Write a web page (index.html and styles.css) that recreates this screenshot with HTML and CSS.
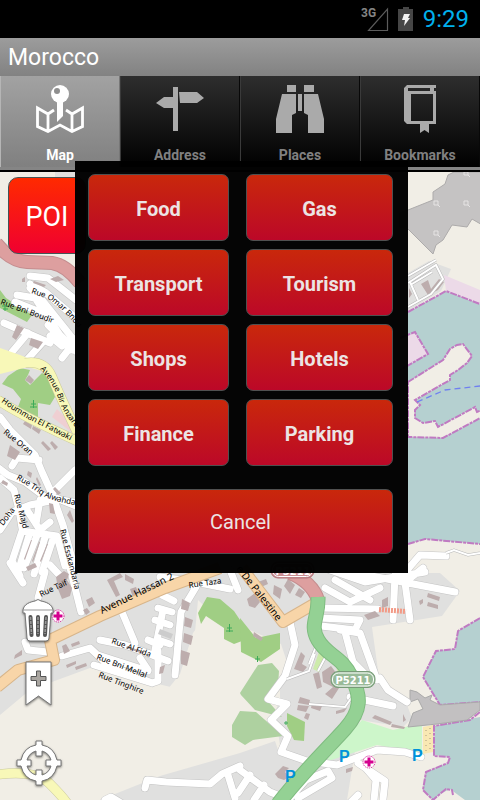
FILE: index.html
```
<!DOCTYPE html>
<html lang="en">
<head>
    <meta charset="UTF-8">
    <meta name="viewport" content="width=device-width, initial-scale=1.0">
    <title>Morocco</title>
    <link rel="stylesheet" href="styles.css">
</head>
<body>
    <div class="status-bar">
        <svg class="signal" width="28" height="24" viewBox="0 0 28 24">
            <text x="0" y="10" class="signal-text">3G</text>
            <path d="M26.500 2V23.500H7.500Z" fill="none" stroke="#5c5c5c" stroke-width="1.200"/>
        </svg>
        <svg class="battery" width="16" height="24" viewBox="0 0 16 24">
            <path d="M5 0h6v2h4v22H0V2h5z" fill="#464646"/>
            <path d="M6 7h6l-2 4h2L6 19l1-6H4z" fill="#f2f2f2"/>
        </svg>
        <span class="clock">9:29</span>
    </div>
    <header class="title-bar"><h1>Morocco</h1></header>
    <nav class="tabs">
        <a href="#map" class="tab active">
            <svg width="48" height="48" viewBox="0 0 48 48">
                <circle cx="24" cy="9" r="9" fill="currentColor"/>
                <circle cx="21" cy="6" r="3" fill="#8f8f8f"/>
                <path d="M21 17h6v14l-6 6z" fill="currentColor"/>
                <path d="M18 25l-6 4-10.500-6v18.500l10.500 5 12-6.500 12 6.500 10.500-5V23L36 29l-6-4M12 29v17M36 29v17" fill="none" stroke="currentColor" stroke-width="2.800"/>
            </svg>
            <span>Map</span>
        </a>
        <a href="#address" class="tab">
            <svg width="48" height="48" viewBox="0 0 48 48">
                <path d="M17 2h5v44h-5zM17 12H8l-8 6 8 5h9zM23 7h18l7 6-7 5H24z" fill="currentColor"/>
            </svg>
            <span>Address</span>
        </a>
        <a href="#places" class="tab">
            <svg width="48" height="48" viewBox="0 0 48 48">
                <path d="M11 0h9v7h-9zM28 0h10v7H28zM6 9h14v19l-4 2v18H0V34zM28 9h14l6 25v14H32V30l-4-2zM22 9h4v17h-4z" fill="currentColor"/>
            </svg>
            <span>Places</span>
        </a>
        <a href="#bookmarks" class="tab">
            <svg width="48" height="48" viewBox="0 0 48 48">
                <path fill-rule="evenodd" d="M11 0h29v3h-2v3h2v33h-7v9l-4.500-3-4.500 3v-9H11l-3-3V3zM12 3v3h22V3zM15 9v27h22V9z" fill="currentColor"/>
            </svg>
            <span>Bookmarks</span>
        </a>
    </nav>

    <main class="map-view">
        <svg class="map" viewBox="0 172 480 628" preserveAspectRatio="xMidYMid slice">
            <defs>
                <path id="omar" d="M31 293L48 299Q63 309 76 325L110 360"/>
                <path id="anza" d="M40 369Q53 383 58 398T76 428L110 474"/>
                <path id="houm" d="M1 402Q20 415 36 423T73 442L110 460"/>
                <path id="triq" d="M16 479Q30 487 40 494T75 505L110 515"/>
                <g id="streets">
                    <path d="M30 276L48 278 76 300M30 284L45 292 78 320M30 288L42 300 78 345M17 295L35 298 70 350M15 302l25 10M48 325l25 25M55 330l25 25M50 336l12 10M4 323L50 343M28 333L12 352M43 342L25 362M62 358L80 335"/>
                    <path d="M0 417L10 430 35 455 42 472 52 494 63 525 75 570M-3 467L8 475 25 482 45 497 78 503M12 466l5-8 22 2M0 478L14 490 19 510 22 528M0 530L12 512 30 505 55 500M25 507L40 530 50 522M40 500l-4 24M75 470l-25 25M56 498l20 8"/>
                    <path d="M22 531l-10 30 8 15M30 532l-12 40M38 533l-14 35M46 534l-12 40M54 536l-12 36M22 531l35 5 8 30M10 563l13 20M45 572L38 598M50 565l14 15M70 568l11 44"/>
                    <path d="M25 642l3 8 20 2M122 612l13 31M100 640l25 5 28 10M62 656L90 648 108 665 152 683M98 655l50 16M94 665l58 18 6-2v-30M140 658l8 12M155 650l8-40M158 640l12 4M148 640l12 5M155 620l15 5M158 608l14 4M162 595l12 6M152 655l16 6M196 587l-15 25-6 63M160 577l30 4 40 8M197 571l-3 18M230 570l8 20"/>
                    <path d="M145 788L147 780 166 782 210 784 222 774 240 766M228 775L235 798M105 800l6-3 10 6M240 770L270 792 290 800M250 775l-12 18M264 785l-10 15"/>
                    <path d="M290 622L295 645 285 676 268 699 287 704 271 720 288 736 281 752 307 761 337 765 377 750 405 752 421 757"/>
                    <path d="M325 588L350 602 380 588M335 580L370 600M330 570L365 582 425 572M340 570L455 592M395 575l-2 45M404 575l6 45M320 608l58 1M320 618l40 2-5 10-34-4M340 630l20 3 17 47M345 632l8 30 18 18M380 678l8 12 19 12M350 697l43 9M408 580l15-12"/>
                    <path d="M298 798l34-20-4-7-22 9-14 16M358 763l27 18-2 18M363 765l13 15-2 20M350 803l8-8"/>
                    <path d="M408 569L420 555 446 556"/>
                </g>
            </defs>
            <rect y="172" width="480" height="628" fill="#f1eee6"/>

            <!-- built up areas -->
            <g fill="#e0e0df">
                <path d="M0 238L27 260 80 275V573H440L460 591 442 616 372 627 380 685 407 705 412 718 403 727 360 720 347 800H100L160 780 240 752V640L198 600 192 665 175 688 90 668 30 690 0 715z"/>
                <path d="M55 178l20 8v-14H55z"/>
                <path d="M408 273l21-12 22 8-10 22-33 20z"/>
            </g>
            <path d="M193 633l20-27 28 20 40 18 10 30-16 38 6 40-40 4-42 28H150l-10-60 40-50z" fill="#f1eee6"/>
            <path d="M100 800l60-24 80-23 35-12 20 59z" fill="#e0e0df"/>
            <path d="M280 690l15-48 30-16 22 36 11 37-32 40-46 12z" fill="#e0e0df"/>
            <path d="M388 760l4 0-14 40h80V760z" fill="#f1eee6"/>

            <!-- parks and woods -->
            <g fill="#a0ce84">
                <path d="M0 290L6 298 32 315 27 322 0 308z"/>
                <path d="M20 368l10 2-2 5-3 5 5 5 12-12 8 4 5 20-5 8-12-2v14l-6 2-14-12 3-8-8-10-11-5 6-8z"/>
                <path d="M198 613l9-16 13 2 14 12 8 12v18l-8 3-10-5v-11l-18-12-5 8z"/>
                <path d="M240 618l16 20 24-5v16l-19 13-20-10z"/>
                <path d="M287 713l18 9-1 19-10-1-7-14z"/>
            </g>
            <g fill="#aed1a0">
                <path d="M240 693l18-28 14-2 7 8-1 15-11 14 15 17-27-7-14-15z"/>
                <path d="M232 725l8-14 16 1 17 15 10 9-30 4-8 5-13-8z"/>
            </g>
            <path d="M362 720l31 10 29-7v30l-45-8-52 17z" fill="#cdf6ca"/>
            <path d="M319 652l7 5-7 15-6-3zM336 665l10 12-8-1z" fill="#cdebab"/>
            <path d="M57 409l18 18v8l-23-18z" fill="#efcfd2"/>
            <path d="M423 727l10-2v27l-10 2z" fill="#f9e8b3"/>
            <path d="M426 730v21M430 728v22" stroke="#a99b7c" stroke-width="1" stroke-dasharray="1 4"/>

            <!-- sea -->
            <g fill="#b5d0d0">
                <path d="M408 312L446 291 480 304V544L425 539 408 544z"/>
                <path d="M480 618l-22 13-3 18-19 2-13 26 17 28 40-3z"/>
                <path d="M480 717l-45 9-1 29 16 2-2 6-22 9-3 18 10 10 7-6 10-5 34 25z"/>
            </g>
            <path d="M444 275l36 15v14l-34-13z" fill="#ecdae8"/>
            <path class="coast-land" d="M408 382L443 360 450 349 457 345 463 344 472 356 467 363 458 370 450 375 450 380 415 400 420 405 415 410 415 418 423 423 435 421 438 427 475 407 477 412 484 409V416L443 438 408 437z"/>
            <path d="M400 338l15-6 13 22-28 16z" fill="#ecdae8"/>
            <g class="coast">
                <path d="M408 312L446 291 480 304"/>
                <path d="M400 338l15-6 13 22-28 16"/>
                <path d="M408 544L425 539 480 544"/>
                <path d="M480 618l-22 13-3 18-19 2-13 26 17 28 40-3"/>
                <path d="M480 712l-10 8-36 6v30l16 1-2 6-22 9-3 18 10 10 8-7 5-4 6 1 1 5"/>
            </g>
            <path d="M417 402L445 390 480 386" fill="none" stroke="#7080f0" stroke-width="1.300" stroke-dasharray="6 4"/>
            <path d="M400 213l8-3 25-10v-8l12-8 3-9 6-3h30v54l-12-7-5 8-15-2-9 15-7 5-3 9-25-25-8-2z" fill="#c5c3c3" stroke="#adabab"/>
            <path d="M410 690l7 2 8 6 7-3-2 5 10 5 40-3v8l-13 10-30 4-29 3 5-14 10-4-5-10-8 3z" fill="#c2c0c1" stroke="#aaa"/>
            <g fill="none" stroke="#e6e4e4">
                <path d="M464 172h4v3h-4zM468 175l2 2M434 201h4v4h-4zM438 205l2 2M464 201h4v4h-4zM468 205l2 2M434 231h4v4h-4zM438 235l2 2"/>
            </g>

            <!-- streets, outline first and then the fill -->
            <use href="#streets" class="case"/>
            <use href="#streets" class="fill"/>

            <!-- buildings -->
            <g fill="#bdadad">
                <path d="M22 279l3-2v5h-3zM34 281l12 4-2 2-11-4zM50 279l8-3 6 4-8 2z"/>
                <path d="M31 338l12 4-5 7-9-4zM17 325l7 3-8 12-4-3z"/>
                <path d="M29 375l5 5-3 4-6-4z"/>
                <path d="M25 421l7 4-1 4-8-5zM33 426l8 4-2 4-7-5zM43 441l8 8-3 2-7-8zM52 441l6 6-3 3-5-7z"/>
                <path d="M10 445l10 7-5 8-8-4zM28 471l4 2-1 5-4-3zM37 477l4 8-2 1-3-7zM55 487l6 6-3 2-5-6zM49 503l4 1 2 10-5-1zM67 515l3-5 4 11-2 2z"/>
                <path d="M3 480l5 3-1 3-6-3zM26 567l9-4 2 4-9 4zM31 540l1 0-7 20-1-1zM39 542l1 0-7 20-1-1zM47 544l1 0-7 18-1-1z"/>
                <path d="M56 577l8-6 5 3-2 6 5 8-2 8-8 3-4-10z"/>
                <path d="M107 580l13-7 3 4-9 4 6 14-4 2zM125 574l9 5-1 5-8-4zM130 589l6-2 5 12-6 4zM86 600l6-3 3 6-6 4zM83 610l4-2 3 4-4 3z"/>
                <path d="M62 646l4-2 4 7-6 3zM71 644l8-3 1 3-8 3zM66 665l10-4v3l-9 4zM75 667l11-4 1 3-11 4zM15 655l7-5v5l-8 4zM23 671l13-3-4 4-9 2z"/>
                <path d="M182 599l8 4-2 8-7-2zM185 617l8 3-2 8-7-2zM184 633l9 3-2 9-8-3zM181 650l9 3-3 13-6-2zM160 667l5-2-2 8-4 1zM127 646l17 6-1 2-17-6z"/>
                <path d="M247 599l8-6 5 9-5 6-6-2zM258 582l8-3 2 5-7 3zM274 585l8 4-2 10-7-5zM288 579l7 6-5 9-6-8zM299 588l6 4-4 6-6-3z"/>
                <path d="M254 632l9 6-2 3-8-5zM301 652l4 4-3 8 5 3-4 5-9-3zM322 672l9-6 6 8-7 6 11 5-9 14-7-5 8-7-10-5zM313 674l6-2 3 15-5 2zM300 697l10 3-1 5-11-2zM298 705l11 1-3 6-9-2zM312 703l10 3-2 5-9-3zM336 711l11-3-3 4-8 2zM306 713l4 1-2 6-4-2z"/>
                <path d="M364 615l11-4 5 5-12 4zM428 593l12 4-1 4-12-4zM428 602l10 3v4l-11-3zM419 601l4-2v4l-3 2zM382 600l6-3v9l-6 2zM375 715l17 7-2 3-18-7zM392 724l13 3-1 2-13-2zM403 714l3 6-3 2z"/>
                <path d="M275 774l8-8 6 2-4 4 4 5-5 3-6-2zM346 769l7-2-1 4-6 2z"/>
                <path d="M421 284l7-4 3 9 8-10 5 3-6 8-10 5zM409 288l3 6-3 4z"/>
            </g>
            <path d="M160 629l13 5-2 5-13-5z" fill="#ccc"/>
            <path d="M379 609.500l27 2" stroke="#f29a86" stroke-width="5" stroke-dasharray="2 1"/>

            <!-- footways and quays -->
            <g fill="none" stroke="#b8b8b8" stroke-width="3">
                <path d="M309 664l8-20-6-8M318 671l8-15M287 679l22-8 6-17M309 704l36 3 7-10M408 283l28-18 7 14-12 15-25 14M408 276l28-16M410 282l8 18M432 272l-20 12M446 553l8-3 14 5 12-2"/>
            </g>
            <g fill="none" stroke="#fff" stroke-width="2">
                <path d="M309 664l8-20-6-8M318 671l8-15M287 679l22-8 6-17M309 704l36 3 7-10M408 283l28-18 7 14-12 15-25 14M408 276l28-16M410 282l8 18M432 272l-20 12M446 553l8-3 14 5 12-2"/>
            </g>

            <!-- main roads -->
            <g class="road">
                <path d="M0 348L20 355 47 366 45 372 28 367 0 374z" fill="#f8f8b8"/>
                <path d="M25 363Q45 360 52 377T77 432" stroke="#c9c99b" stroke-width="10"/>
                <path d="M-2 400Q20 415 77 441M-5 775Q35 769 50 784T68 805" stroke="#c9c99b" stroke-width="10"/>
                <path d="M-2 360L25 363Q45 360 52 377T77 432" stroke="#f8f8b8" stroke-width="9"/>
                <path d="M-2 400Q20 415 77 441M-5 775Q35 769 50 784T68 805" stroke="#f8f8b8" stroke-width="9"/>
                <path d="M-3 687L18 670 54 660 50 640 100 616 165 588 220 568M242 568L283 622 314 604" stroke="#d7b58b" stroke-width="12"/>
                <path d="M-3 687L18 670 54 660 50 640 100 616 165 588 220 568M242 568L283 622 314 604" stroke="#f8d5a8" stroke-width="10"/>
                <path d="M-4 243Q10 261 27 262L52 263Q66 265 80 283M290 573Q312 582 318 600" stroke="#c48d8f" stroke-width="14"/>
                <path d="M-4 243Q10 261 27 262L52 263Q66 265 80 283M290 573Q312 582 318 600" stroke="#dd9f9f" stroke-width="12"/>
                <path d="M318 597C319 618 309 624 318 640S342 656 352 678C361 696 362 710 345 729S300 775 278 804" stroke="#7fbc80" stroke-width="15"/>
                <path d="M318 597C319 618 309 624 318 640S342 656 352 678C361 696 362 710 345 729S300 775 278 804" stroke="#94d194" stroke-width="13"/>
            </g>
            <rect x="331" y="671.500" width="44" height="16" rx="7" fill="#98ba98" stroke="#789b78"/>
            <rect x="332.500" y="673" width="41" height="13" rx="6" fill="none" stroke="#fff"/>
            <text x="353" y="683.500" class="shield">P5211</text>
            <rect x="271" y="562" width="43" height="16" rx="7" fill="#ca8d92" stroke="#b2757b"/>
            <rect x="272.500" y="563.500" width="40" height="13" rx="6" fill="none" stroke="#fff"/>
            <text x="293" y="575" class="shield">P5211</text>

            <!-- labels -->
            <g class="label">
                <text><textPath href="#omar">Rue Omar Bnou</textPath></text>
                <text><textPath href="#anza">Avenue Bir Anzaren</textPath></text>
                <text><textPath href="#houm">Houmman El Fatwaki</textPath></text>
                <text><textPath href="#triq">Rue Triq Alwahda</textPath></text>
                <text transform="translate(0 304) rotate(20)">Rue Bni Boudir</text>
                <text transform="translate(3 433) rotate(39)">Rue Oran</text>
                <text transform="translate(14 495) rotate(75)">Rue Majd</text>
                <text transform="translate(3 526) rotate(-52)">Doha</text>
                <text transform="translate(60 530) rotate(76)">Rue Esskandaria</text>
                <text transform="translate(41 597) rotate(-25)">Rue Taif</text>
                <text transform="translate(102 614) rotate(-26)" class="big">Avenue Hassan 2</text>
                <text transform="translate(189 588) rotate(-8)">Rue Taza</text>
                <text transform="translate(111 643) rotate(20)">Rue Al Fida</text>
                <text transform="translate(96 659) rotate(21)">Rue Bni Mellal</text>
                <text transform="translate(98 677) rotate(21)">Rue Tinghire</text>
                <text transform="translate(236 569) rotate(52)" class="big">e De Palestine</text>
            </g>
            <g class="parking">
                <text x="285" y="782">P</text>
                <text x="339" y="762">P</text>
                <text x="412" y="761">P</text>
            </g>
            <g stroke="#d5008f" fill="#fff">
                <circle cx="369" cy="762" r="6" stroke-dasharray="1 1"/>
                <circle cx="58" cy="616" r="6" stroke-dasharray="1 1"/>
                <path d="M369 757.500v9M364.500 762h9M58 611.500v9M53.500 616h9" stroke-width="3"/>
            </g>
            <g fill="none" stroke="#3dab58">
                <path d="M33.500 400v8M31 404h5M30 407h7M229.500 624v8M227 628h5M226 631h7M257.500 656v6M255 659h5M5 306v5M2 306h6M3 309h5M286 721v4M284 723h4"/>
            </g>
        </svg>

        <button class="poi-button">POI</button>

        <div class="map-tools">
            <button class="tool" aria-label="Delete">
                <svg width="46" height="48" viewBox="0 0 46 48">
                    <path d="M7 14C8 8 14 6 19 5q3-3 6 0c5 1 11 3 12 9v3h-2l-2 25q0 3-3 3H14q-3 0-3-3L9 17H7z" class="shape"/>
                    <path d="M7 14h30" stroke="#999"/>
                    <path d="M14.500 21l1 18M22 21v18M30 21l-1 18" stroke="#555" stroke-width="4" stroke-linecap="round"/>
                    <path d="M14.500 21l1 17M22 21v17M30 21l-1 17" stroke="#999" stroke-width="1.500" stroke-dasharray="3 1"/>
                </svg>
            </button>
            <button class="tool" aria-label="Add bookmark">
                <svg width="46" height="48" viewBox="0 0 46 48">
                    <path d="M10 2h25v43L22.500 36 10 45z" class="shape"/>
                    <path d="M20.500 11h4v5.500H30v4h-5.500V26h-4v-5.500H15v-4h5.500z" fill="#a9a5a0" stroke="#555"/>
                </svg>
            </button>
            <button class="tool locate" aria-label="My location">
                <svg width="46" height="46" viewBox="0 0 46 46">
                    <path fill-rule="evenodd" d="M20 1h6v4q12 2 15 15h4v6h-4q-3 13-15 15v4h-6v-4Q8 39 5 26H1v-6h4Q8 7 20 5zM20 11q-7 2-9 9h4v6h-4q2 7 9 9v-5h6v5q7-2 9-9h-5v-6h5q-2-7-9-9v5h-6z" class="shape"/>
                </svg>
            </button>
        </div>
    </main>

    <div class="dialog" role="dialog" aria-label="Points of interest">
        <div class="choices">
            <button>Food</button>
            <button>Gas</button>
            <button>Transport</button>
            <button>Tourism</button>
            <button>Shops</button>
            <button>Hotels</button>
            <button>Finance</button>
            <button>Parking</button>
        </div>
        <button class="cancel">Cancel</button>
    </div>
</body>
</html>
```
FILE: styles.css
```
* {
    box-sizing: border-box;
}
body {
    margin: 0;
    min-height: 100vh;
    display: flex;
    flex-direction: column;
    position: relative;
    background: #000;
    font-family: Roboto, 'Liberation Sans', sans-serif;
}
button {
    font-family: inherit;
    cursor: pointer;
}

/* Status bar */
.status-bar {
    height: 38px;
    padding: 0 11px;
    display: flex;
    align-items: center;
    justify-content: flex-end;
    gap: 9px;
}
.signal-text {
    font-size: 12px;
    font-weight: bold;
    fill: #858585;
}
.clock {
    font-size: 24px;
    color: #00b0ec;
}

/* Title */
.title-bar {
    height: 38px;
    padding: 0 8px;
    display: flex;
    align-items: center;
    background: linear-gradient(#9c9c9c, #828282);
}
.title-bar h1 {
    margin: 0;
    font-size: 23px;
    font-weight: normal;
    color: #fff;
}

/* Tabs */
.tabs {
    display: grid;
    grid-template-columns: repeat(4, 1fr);
    height: 96px;
    border-bottom: 2px solid #000;
    background: #858585;
}
.tab {
    display: flex;
    flex-direction: column;
    align-items: center;
    justify-content: space-between;
    height: 91px;
    padding: 9px 0 4px;
    border-left: 1px solid #3a3a3a;
    border-right: 1px solid #080808;
    background: linear-gradient(#2e2e2e, #000);
    color: #aaa;
    font-size: 14px;
    font-weight: bold;
    line-height: 16px;
    text-decoration: none;
}
.tab span {
    color: #808080;
}
.tab.active {
    background: linear-gradient(#a2a2a2, #808080);
    border-left-color: #b5b5b5;
    border-right-color: #777;
    color: #fff;
}
.tab.active span {
    color: #fff;
}

/* Map */
.map-view {
    flex: 1;
    position: relative;
    min-height: 420px;
    overflow: hidden;
}
.map {
    position: absolute;
    width: 100%;
    height: 100%;
}
.case,
.fill {
    fill: none;
    stroke-linecap: round;
    stroke-linejoin: round;
}
.case {
    stroke: #c4c4c4;
    stroke-width: 8px;
}
.fill {
    stroke: #fff;
    stroke-width: 7px;
}
.road {
    fill: none;
    stroke-linejoin: round;
}
.coast,
.coast-land {
    fill: none;
    stroke: #c07ac2;
    stroke-width: 2px;
    stroke-dasharray: 7 1 3 1;
}
.coast-land {
    fill: #f1eee6;
}
.label {
    font-family: 'Noto Sans', sans-serif;
    font-size: 8px;
    fill: #000;
}
.label .big {
    font-size: 10px;
}
.shield {
    font-family: 'DejaVu Sans', sans-serif;
    font-size: 10px;
    font-weight: bold;
    fill: #fff;
    text-anchor: middle;
}
.parking {
    font-family: 'Liberation Sans', sans-serif;
    font-size: 16px;
    font-weight: bold;
    fill: #0092da;
}
.poi-button {
    position: absolute;
    top: 5px;
    left: 8px;
    width: 78px;
    height: 77px;
    padding: 2px 0 0;
    border: 1px solid #455;
    border-radius: 10px;
    background: linear-gradient(#ff2a00, #f00030);
    color: #fff;
    font-size: 27px;
}
.map-tools {
    position: absolute;
    left: 16px;
    bottom: 14px;
    display: flex;
    flex-direction: column;
    gap: 16px;
}
.tool {
    display: block;
    padding: 0;
    border: 0;
    background: none;
}
.tool svg {
    display: block;
    filter: drop-shadow(0 1px 1px rgba(0, 0, 0, 0.5));
}
.tool .shape {
    fill: #fff;
    stroke: #777;
}
.locate {
    margin-top: 16px;
}

/* POI dialog */
.dialog {
    position: absolute;
    top: 161px;
    left: 75px;
    right: 72px;
    padding: 13px 15px 19px 13px;
    background: rgba(0, 0, 0, 0.98);
}
.choices {
    display: grid;
    grid-template-columns: 141fr 147fr;
    grid-auto-rows: 67px;
    gap: 8px 17px;
    margin-bottom: 23px;
}
.dialog button {
    padding: 2px 0 0;
    border: 1px solid #505050;
    border-radius: 7px;
    background: linear-gradient(#c9280b, #bc0828);
    color: #ece4e4;
    font-size: 20px;
    font-weight: bold;
}
.dialog .cancel {
    width: 100%;
    height: 65px;
    padding: 0;
    font-weight: normal;
}
```
